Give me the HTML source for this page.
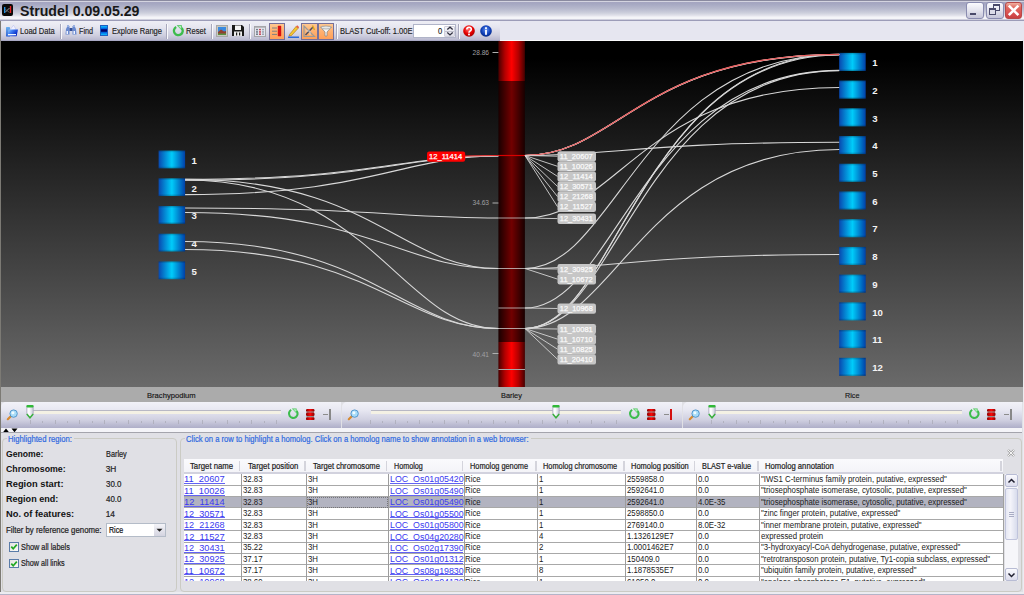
<!DOCTYPE html><html><head><meta charset="utf-8"><style>
*{box-sizing:border-box;margin:0;padding:0}
html,body{width:1024px;height:595px;overflow:hidden;background:#e0e0e5;font-family:'Liberation Sans', sans-serif;}
.a{position:absolute;white-space:nowrap}
</style></head><body>

<div class="a" style="left:0;top:0;width:1024px;height:21px;background:linear-gradient(#8a8aa0 0px,#8a8aa0 1px,#d4d4e0 1px,#d4d4e0 2px,#a4a4c0 2px,#a6a8c2 4px,#b8bace 9px,#cdcfdc 13px,#e6e6ee 16px,#f4f4f8 17px,#f4f4f8 19px,#c8c8d8 19.6px,#9c9cb8 20px,#9c9cb8 21px)"></div>
<div class="a" style="left:0;top:21px;width:1px;height:574px;background:#7c7a74"></div>
<div class="a" style="left:1023px;top:21px;width:1px;height:574px;background:#ececf0"></div>
<svg class="a" style="left:2px;top:4px" width="11" height="12"><rect x="0" y="0" width="11" height="12" rx="2" fill="#0a0a0a"/>
<rect x="2" y="3" width="1.4" height="6" fill="#2090e0"/><rect x="7.8" y="2" width="1.4" height="7" fill="#e02020"/>
<path d="M3.5 8 L7.5 4" stroke="#a0a0a0" stroke-width="1"/><path d="M3.5 5.5 L7.5 8.5" stroke="#707070" stroke-width="0.8"/></svg>
<div class="a" style="left:19.80px;top:4.08px;font:bold 14px/14px 'Liberation Sans', sans-serif;color:#181818;transform:scaleX(1.010);transform-origin:0 0;">Strudel 0.09.05.29</div>
<div class="a" style="left:966px;top:2px;width:18px;height:17px;border:1px solid #8a8cb0;border-radius:3px;background:linear-gradient(#fbfbfe,#e4e4ee 50%,#c4c4d8)"></div>
<div class="a" style="left:970px;top:13px;width:6px;height:2px;background:#4a4a6a"></div>
<div class="a" style="left:986px;top:2px;width:18px;height:17px;border:1px solid #8a8cb0;border-radius:3px;background:linear-gradient(#fbfbfe,#e4e4ee 50%,#c4c4d8)"></div>
<div class="a" style="left:993px;top:4px;width:7px;height:7px;border:1px solid #4a4a6a;border-top-width:2px"></div>
<div class="a" style="left:989px;top:8px;width:7px;height:7px;border:1px solid #4a4a6a;border-top-width:2px;background:#dcdce8"></div>
<div class="a" style="left:1005px;top:2px;width:17px;height:17px;border:1px solid #b84848;border-radius:3px;background:linear-gradient(#f0b0a0,#e06a60 30%,#d85050 70%,#c84040)"></div>
<svg class="a" style="left:1005px;top:2px" width="17" height="17"><path d="M3.8 3.6 L13.4 13.2 M13.4 3.6 L3.8 13.2" stroke="#fff" stroke-width="2.6"/></svg>
<div class="a" style="left:1px;top:21px;width:1023px;height:20px;background:#e6e6f0"></div>
<div class="a" style="left:1px;top:21px;width:499px;height:20px;border-radius:5px 0 0 0;background:linear-gradient(#eeeef5,#e6e6f0 30%,#d0d0e0 70%,#b4b4cc)"></div>
<div class="a" style="left:1px;top:40px;width:499px;height:1px;background:#a8a8c4"></div>
<div class="a" style="left:500px;top:40px;width:522px;height:1px;background:#fafafc"></div>
<svg class="a" style="left:3px;top:22px" width="16" height="16"><defs><linearGradient id="fb" x1="0" y1="0" x2="0" y2="1"><stop offset="0" stop-color="#6ab0f0"/><stop offset="1" stop-color="#3060d0"/></linearGradient><linearGradient id="ff" x1="0" y1="0" x2="1" y2="0.6"><stop offset="0" stop-color="#a0dcff"/><stop offset="0.45" stop-color="#3a78f0"/><stop offset="1" stop-color="#0020c0"/></linearGradient></defs><rect x="3" y="5" width="4" height="9.5" rx="0.6" fill="url(#fb)"/><path d="M6.5 8.5 L10.5 3.2 L13.2 7.6 L8.5 9.2z" fill="#f2f2ff" stroke="#b0b8ec" stroke-width="0.5"/><path d="M5.6 7.4 H15 L13.6 14.2 H4.4z" fill="url(#ff)"/><rect x="5" y="12" width="8" height="1.3" fill="#eef6ff"/></svg>
<div class="a" style="left:20.20px;top:26.68px;font:8.3px/8.3px 'Liberation Sans', sans-serif;color:#1c1c1c;transform:scaleX(0.909);transform-origin:0 0;-webkit-text-stroke:0.15px #1c1c1c">Load Data</div>
<div class="a" style="left:60px;top:24px;width:1px;height:15px;background:#a8a8bc"></div><div class="a" style="left:61px;top:24px;width:1px;height:15px;background:#fafafc"></div>
<svg class="a" style="left:65px;top:25px" width="12" height="10"><path d="M1 4 L2.5 1 h2 v8.5 h-4z" fill="#6a8ad0"/><path d="M11 4 L9.5 1 h-2 v8.5 h4z" fill="#6a8ad0"/><rect x="4.5" y="3" width="3" height="3" fill="#34509a"/><rect x="2" y="0" width="2" height="2" fill="#9ab0e0"/><rect x="8" y="0" width="2" height="2" fill="#9ab0e0"/><rect x="1.5" y="6" width="1.5" height="3" fill="#f0f4ff"/><rect x="8.5" y="6" width="1.5" height="3" fill="#f0f4ff"/></svg>
<div class="a" style="left:79.00px;top:26.58px;font:8.3px/8.3px 'Liberation Sans', sans-serif;color:#1c1c1c;transform:scaleX(0.873);transform-origin:0 0;-webkit-text-stroke:0.15px #1c1c1c">Find</div>
<div class="a" style="left:100px;top:25px;width:8px;height:11px;border:1px solid #2060c0;background:linear-gradient(#10c0ff,#0060e0 30%,#000070 42%,#000060 58%,#0060e0 70%,#10c0ff)"></div>
<div class="a" style="left:111.80px;top:26.68px;font:8.3px/8.3px 'Liberation Sans', sans-serif;color:#1c1c1c;transform:scaleX(0.911);transform-origin:0 0;-webkit-text-stroke:0.15px #1c1c1c">Explore Range</div>
<div class="a" style="left:166px;top:24px;width:1px;height:15px;background:#a8a8bc"></div><div class="a" style="left:167px;top:24px;width:1px;height:15px;background:#fafafc"></div>
<svg class="a" style="left:171.5px;top:25px" width="12" height="12"><path d="M4.2 1.9 A4.4 4.4 0 1 0 9.7 2.9" fill="none" stroke="#3cbc4c" stroke-width="2.3"/><path d="M4.6 0.3 H9.9 V5.6z" fill="#40c050"/><path d="M6.2 1 H9.1 V3.9z" fill="#b0f0b8"/></svg>
<div class="a" style="left:185.90px;top:26.68px;font:8.3px/8.3px 'Liberation Sans', sans-serif;color:#1c1c1c;transform:scaleX(0.913);transform-origin:0 0;-webkit-text-stroke:0.15px #1c1c1c">Reset</div>
<div class="a" style="left:211px;top:24px;width:1px;height:15px;background:#a8a8bc"></div><div class="a" style="left:212px;top:24px;width:1px;height:15px;background:#fafafc"></div>
<svg class="a" style="left:216px;top:25px" width="12" height="12"><rect x="0.5" y="0.5" width="11" height="11" fill="#c8c8c0" stroke="#a8a8a8"/><rect x="2" y="2" width="8" height="8" fill="#3a8ae0"/><path d="M2 7 L5 4.5 L8 6.5 L10 6 V10 H2z" fill="#904030"/><rect x="2" y="8.5" width="8" height="1.5" fill="#5a9040"/></svg>
<svg class="a" style="left:232px;top:25px" width="12" height="11"><path d="M0 0 h10 l2 2 v9 h-12z" fill="#1a1a1a"/><rect x="3" y="0.5" width="6" height="4.5" fill="#f4f4f4"/><rect x="2" y="6.5" width="8" height="4.5" fill="#ececec"/><rect x="4" y="7.5" width="1.2" height="3" fill="#1a1a1a"/><rect x="7" y="7.5" width="1.2" height="3" fill="#1a1a1a"/></svg>
<div class="a" style="left:249px;top:24px;width:1px;height:15px;background:#a8a8bc"></div><div class="a" style="left:250px;top:24px;width:1px;height:15px;background:#fafafc"></div>
<svg class="a" style="left:254px;top:25.5px" width="12" height="11"><rect x="0.5" y="0.5" width="11" height="10" fill="#e4e4ec" stroke="#a4a4a8"/><rect x="0.5" y="0.5" width="11" height="1.2" fill="#a8a8ac"/>
<g fill="#586878"><circle cx="3" cy="3.6" r="0.9"/><circle cx="3" cy="5.9" r="0.9"/><circle cx="3" cy="8.2" r="0.9"/></g>
<g fill="#c02838"><circle cx="6" cy="3.6" r="0.9"/><circle cx="6" cy="5.9" r="0.9"/><circle cx="6" cy="8.2" r="0.9"/></g>
<g fill="#8898a8"><circle cx="9" cy="3.6" r="0.9"/><circle cx="9" cy="5.9" r="0.9"/><circle cx="9" cy="8.2" r="0.9"/></g></svg>
<div class="a" style="left:269px;top:23px;width:16px;height:16.5px;border:1px solid #76709a;background:linear-gradient(#ffc890,#ffb070 50%,#ffa058)"></div>
<svg class="a" style="left:271px;top:25px" width="12" height="12"><rect x="6.8" y="0.8" width="3.4" height="10.4" rx="0.6" fill="#d81010"/><path d="M1 3h5M1 6.2h5M1 9.4h5" stroke="#808080" stroke-width="1"/></svg>
<svg class="a" style="left:288px;top:24px" width="11" height="14"><path d="M1.5 10.5 L8 2.5 L10 4.5 L3.5 11.5 L1 12z" fill="#f4c830" stroke="#b07010" stroke-width="0.6"/><path d="M8 2.5 l1.2-1.2 2 2 -1.2 1.2z" fill="#e86040"/><rect x="0" y="12.5" width="11" height="1.5" fill="#2a6ad8"/></svg>
<div class="a" style="left:301px;top:23px;width:17px;height:16.5px;border:1px solid #76709a;background:linear-gradient(#ffc890,#ffb070 50%,#ffa058)"></div>
<div class="a" style="left:318px;top:23px;width:16px;height:16.5px;border:1px solid #76709a;background:linear-gradient(#ffc890,#ffb070 50%,#ffa058)"></div>
<svg class="a" style="left:303px;top:25px" width="13" height="12"><path d="M1 11.5 V1 L11.5 11.5z" fill="none" stroke="#9a9a9a" stroke-width="1.2"/><path d="M2.5 10 L10 2" stroke="#505060" stroke-width="1.4"/><path d="M9.5 0.5 L11.5 5" stroke="#d8a820" stroke-width="1.5"/><path d="M3 6 h4 v4" fill="none" stroke="#e0e0e0" stroke-width="0.8"/></svg>
<svg class="a" style="left:320px;top:25px" width="12" height="12"><path d="M0.5 2 L11.5 2 L7 7 L7 11 L5 11 L5 7z" fill="#f8f8f8" stroke="#8a8a8a" stroke-width="0.8"/><ellipse cx="6" cy="2.5" rx="5" ry="1.5" fill="#e8e8e8" stroke="#8a8a8a" stroke-width="0.6"/></svg>
<div class="a" style="left:336px;top:24px;width:1px;height:15px;background:#a8a8bc"></div><div class="a" style="left:337px;top:24px;width:1px;height:15px;background:#fafafc"></div>
<div class="a" style="left:339.60px;top:26.68px;font:8.3px/8.3px 'Liberation Sans', sans-serif;color:#1c1c1c;transform:scaleX(0.913);transform-origin:0 0;-webkit-text-stroke:0.15px #1c1c1c">BLAST Cut-off: 1.00E</div>
<div class="a" style="left:413px;top:24px;width:43px;height:14px;border:1px solid #b0b4c8;background:#fff"></div>
<div class="a" style="left:437.80px;top:26.88px;font:8.3px/8.3px 'Liberation Sans', sans-serif;color:#1c1c1c;transform:scaleX(0.910);transform-origin:0 0;-webkit-text-stroke:0.15px #1c1c1c">0</div>
<div class="a" style="left:444px;top:25.5px;width:10.5px;height:11.5px;background:linear-gradient(#f6f6fa,#dedee8);border:1px solid #d0d0dc;border-radius:1px"></div><div class="a" style="left:445px;top:30.5px;width:9px;height:1px;background:#c0c0cc"></div>
<svg class="a" style="left:445.5px;top:26px" width="8" height="10"><path d="M1.3 3.6 L4 1.2 L6.7 3.6 M1.3 6.5 L4 8.9 L6.7 6.5" fill="none" stroke="#303040" stroke-width="1.3"/></svg>
<div class="a" style="left:458px;top:24px;width:1px;height:15px;background:#a8a8bc"></div><div class="a" style="left:459px;top:24px;width:1px;height:15px;background:#fafafc"></div>
<svg class="a" style="left:463px;top:25px" width="12" height="12"><defs><radialGradient id="rq" cx="0.45" cy="0.35" r="0.65"><stop offset="0" stop-color="#ff7070"/><stop offset="0.6" stop-color="#e80000"/><stop offset="1" stop-color="#a00000"/></radialGradient><radialGradient id="bq" cx="0.5" cy="0.4" r="0.65"><stop offset="0" stop-color="#6090f0"/><stop offset="0.6" stop-color="#1040b8"/><stop offset="1" stop-color="#002070"/></radialGradient></defs><circle cx="6" cy="6" r="5.8" fill="url(#rq)"/><path d="M3.8 4.5 Q3.8 2.2 6 2.2 Q8.3 2.2 8.3 4.3 Q8.3 5.5 6.8 6.3 Q6 6.8 6 7.8" fill="none" stroke="#fff" stroke-width="1.6"/><rect x="5.1" y="8.6" width="1.8" height="1.7" fill="#fff"/></svg>
<svg class="a" style="left:480px;top:25px" width="12" height="12"><circle cx="6" cy="6" r="5.8" fill="url(#bq)"/><rect x="5.1" y="2.2" width="1.8" height="1.8" fill="#fff"/><rect x="5.1" y="4.8" width="1.8" height="5" fill="#fff"/></svg>
<svg class="a" style="left:1px;top:41px" width="1022" height="346" viewBox="1 41 1022 346">
<defs>
<linearGradient id="bg" x1="0" y1="41" x2="0" y2="387" gradientUnits="userSpaceOnUse"><stop offset="0" stop-color="#000"/><stop offset="0.05" stop-color="#000"/><stop offset="1" stop-color="#6a6a6a"/></linearGradient>
<linearGradient id="blue" x1="0" y1="0" x2="1" y2="0"><stop offset="0" stop-color="#0848b0"/><stop offset="0.5" stop-color="#00ccfa"/><stop offset="1" stop-color="#0040a8"/></linearGradient>
<linearGradient id="bshade" x1="0" y1="0" x2="0" y2="1"><stop offset="0" stop-color="#000" stop-opacity="0.25"/><stop offset="0.12" stop-color="#000" stop-opacity="0"/><stop offset="0.88" stop-color="#000" stop-opacity="0"/><stop offset="1" stop-color="#000" stop-opacity="0.25"/></linearGradient>
<linearGradient id="redB" x1="0" y1="0" x2="1" y2="0"><stop offset="0" stop-color="#460000"/><stop offset="0.25" stop-color="#b40000"/><stop offset="0.5" stop-color="#ff0000"/><stop offset="0.75" stop-color="#b40000"/><stop offset="1" stop-color="#460000"/></linearGradient>
<linearGradient id="redD" x1="0" y1="0" x2="1" y2="0"><stop offset="0" stop-color="#180000"/><stop offset="0.5" stop-color="#720000"/><stop offset="1" stop-color="#180000"/></linearGradient>
</defs>
<rect x="0" y="41" width="1024" height="346" fill="url(#bg)"/>
<rect x="158.6" y="150.60" width="26.5" height="17.7" fill="url(#blue)"/>
<rect x="158.6" y="150.60" width="26.5" height="17.7" fill="url(#bshade)"/>
<text x="191.6" y="163.80" style="font-family:'Liberation Sans'" font-weight="bold" font-size="9.6" fill="#f4f4f4">1</text>
<rect x="158.6" y="178.32" width="26.5" height="17.7" fill="url(#blue)"/>
<rect x="158.6" y="178.32" width="26.5" height="17.7" fill="url(#bshade)"/>
<text x="191.6" y="191.52" style="font-family:'Liberation Sans'" font-weight="bold" font-size="9.6" fill="#f4f4f4">2</text>
<rect x="158.6" y="206.04" width="26.5" height="17.7" fill="url(#blue)"/>
<rect x="158.6" y="206.04" width="26.5" height="17.7" fill="url(#bshade)"/>
<text x="191.6" y="219.24" style="font-family:'Liberation Sans'" font-weight="bold" font-size="9.6" fill="#f4f4f4">3</text>
<rect x="158.6" y="233.76" width="26.5" height="17.7" fill="url(#blue)"/>
<rect x="158.6" y="233.76" width="26.5" height="17.7" fill="url(#bshade)"/>
<text x="191.6" y="246.96" style="font-family:'Liberation Sans'" font-weight="bold" font-size="9.6" fill="#f4f4f4">4</text>
<rect x="158.6" y="261.48" width="26.5" height="17.7" fill="url(#blue)"/>
<rect x="158.6" y="261.48" width="26.5" height="17.7" fill="url(#bshade)"/>
<text x="191.6" y="274.68" style="font-family:'Liberation Sans'" font-weight="bold" font-size="9.6" fill="#f4f4f4">5</text>
<rect x="839.2" y="52.90" width="26.5" height="18" fill="url(#blue)"/>
<rect x="839.2" y="52.90" width="26.5" height="18" fill="url(#bshade)"/>
<text x="872.2" y="66.10" style="font-family:'Liberation Sans'" font-weight="bold" font-size="9.6" fill="#f4f4f4">1</text>
<rect x="839.2" y="80.62" width="26.5" height="18" fill="url(#blue)"/>
<rect x="839.2" y="80.62" width="26.5" height="18" fill="url(#bshade)"/>
<text x="872.2" y="93.82" style="font-family:'Liberation Sans'" font-weight="bold" font-size="9.6" fill="#f4f4f4">2</text>
<rect x="839.2" y="108.34" width="26.5" height="18" fill="url(#blue)"/>
<rect x="839.2" y="108.34" width="26.5" height="18" fill="url(#bshade)"/>
<text x="872.2" y="121.54" style="font-family:'Liberation Sans'" font-weight="bold" font-size="9.6" fill="#f4f4f4">3</text>
<rect x="839.2" y="136.06" width="26.5" height="18" fill="url(#blue)"/>
<rect x="839.2" y="136.06" width="26.5" height="18" fill="url(#bshade)"/>
<text x="872.2" y="149.26" style="font-family:'Liberation Sans'" font-weight="bold" font-size="9.6" fill="#f4f4f4">4</text>
<rect x="839.2" y="163.78" width="26.5" height="18" fill="url(#blue)"/>
<rect x="839.2" y="163.78" width="26.5" height="18" fill="url(#bshade)"/>
<text x="872.2" y="176.98" style="font-family:'Liberation Sans'" font-weight="bold" font-size="9.6" fill="#f4f4f4">5</text>
<rect x="839.2" y="191.50" width="26.5" height="18" fill="url(#blue)"/>
<rect x="839.2" y="191.50" width="26.5" height="18" fill="url(#bshade)"/>
<text x="872.2" y="204.70" style="font-family:'Liberation Sans'" font-weight="bold" font-size="9.6" fill="#f4f4f4">6</text>
<rect x="839.2" y="219.22" width="26.5" height="18" fill="url(#blue)"/>
<rect x="839.2" y="219.22" width="26.5" height="18" fill="url(#bshade)"/>
<text x="872.2" y="232.42" style="font-family:'Liberation Sans'" font-weight="bold" font-size="9.6" fill="#f4f4f4">7</text>
<rect x="839.2" y="246.94" width="26.5" height="18" fill="url(#blue)"/>
<rect x="839.2" y="246.94" width="26.5" height="18" fill="url(#bshade)"/>
<text x="872.2" y="260.14" style="font-family:'Liberation Sans'" font-weight="bold" font-size="9.6" fill="#f4f4f4">8</text>
<rect x="839.2" y="274.66" width="26.5" height="18" fill="url(#blue)"/>
<rect x="839.2" y="274.66" width="26.5" height="18" fill="url(#bshade)"/>
<text x="872.2" y="287.86" style="font-family:'Liberation Sans'" font-weight="bold" font-size="9.6" fill="#f4f4f4">9</text>
<rect x="839.2" y="302.38" width="26.5" height="18" fill="url(#blue)"/>
<rect x="839.2" y="302.38" width="26.5" height="18" fill="url(#bshade)"/>
<text x="872.2" y="315.58" style="font-family:'Liberation Sans'" font-weight="bold" font-size="9.6" fill="#f4f4f4">10</text>
<rect x="839.2" y="330.10" width="26.5" height="18" fill="url(#blue)"/>
<rect x="839.2" y="330.10" width="26.5" height="18" fill="url(#bshade)"/>
<text x="872.2" y="343.30" style="font-family:'Liberation Sans'" font-weight="bold" font-size="9.6" fill="#f4f4f4">11</text>
<rect x="839.2" y="357.82" width="26.5" height="18" fill="url(#blue)"/>
<rect x="839.2" y="357.82" width="26.5" height="18" fill="url(#bshade)"/>
<text x="872.2" y="371.02" style="font-family:'Liberation Sans'" font-weight="bold" font-size="9.6" fill="#f4f4f4">12</text>
<rect x="498.4" y="41" width="26.5" height="40" fill="url(#redB)"/>
<rect x="498.4" y="81" width="26.5" height="261" fill="url(#redD)"/>
<rect x="498.4" y="342" width="26.5" height="45" fill="url(#redB)"/>
<line x1="498.4" y1="369.5" x2="525" y2="369.5" stroke="#a8a8a8" stroke-width="1"/>
<line x1="492.5" y1="52.5" x2="498.4" y2="52.5" stroke="#b0b0b0" stroke-width="1"/>
<text x="472.6" y="54.9" style="font-family:'Liberation Sans'" font-size="7.5" textLength="16.4" lengthAdjust="spacingAndGlyphs" fill="#a0a0a4">28.86</text>
<line x1="492.5" y1="203" x2="498.4" y2="203" stroke="#b0b0b0" stroke-width="1"/>
<text x="472.6" y="205.3" style="font-family:'Liberation Sans'" font-size="7.5" textLength="16.4" lengthAdjust="spacingAndGlyphs" fill="#a0a0a4">34.63</text>
<line x1="492.5" y1="353.5" x2="498.4" y2="353.5" stroke="#b0b0b0" stroke-width="1"/>
<text x="472.6" y="356.6" style="font-family:'Liberation Sans'" font-size="7.5" textLength="16.4" lengthAdjust="spacingAndGlyphs" fill="#a0a0a4">40.41</text>
<path d="M185.1 179.3 C373.1 179.3 401.3 155.5 498.4 155.5" fill="none" stroke="#d8d8d8" stroke-width="1.1" opacity="1"/>
<path d="M185.1 180.3 C373.1 180.3 401.3 156 498.4 156" fill="none" stroke="#d8d8d8" stroke-width="1.1" opacity="1"/>
<path d="M185.1 194.6 C373.1 194.6 401.3 156 498.4 156" fill="none" stroke="#d8d8d8" stroke-width="1.1" opacity="1"/>
<path d="M185.1 179.3 C373.1 179.3 401.3 268.5 498.4 268.5" fill="none" stroke="#d8d8d8" stroke-width="1.1" opacity="1"/>
<path d="M185.1 180 C373.1 180 401.3 328.5 498.4 328.5" fill="none" stroke="#d8d8d8" stroke-width="1.1" opacity="1"/>
<path d="M185.1 208 C373.1 208 401.3 218 498.4 218" fill="none" stroke="#d8d8d8" stroke-width="1.1" opacity="1"/>
<path d="M185.1 212.5 C373.1 212.5 401.3 268.5 498.4 268.5" fill="none" stroke="#d8d8d8" stroke-width="1.1" opacity="1"/>
<path d="M185.1 241.5 C373.1 241.5 401.3 328.5 498.4 328.5" fill="none" stroke="#d8d8d8" stroke-width="1.1" opacity="1"/>
<path d="M185.1 249.5 C373.1 249.5 401.3 328.5 498.4 328.5" fill="none" stroke="#d8d8d8" stroke-width="1.1" opacity="1"/>
<line x1="498.4" y1="155.5" x2="525" y2="155.5" stroke="#d0d0d0" stroke-width="0.9" opacity="0.85"/>
<line x1="498.4" y1="218" x2="525" y2="218" stroke="#d0d0d0" stroke-width="0.9" opacity="0.85"/>
<line x1="498.4" y1="268.5" x2="525" y2="268.5" stroke="#d0d0d0" stroke-width="0.9" opacity="0.85"/>
<line x1="498.4" y1="308" x2="525" y2="308" stroke="#d0d0d0" stroke-width="0.9" opacity="0.85"/>
<line x1="498.4" y1="328.5" x2="525" y2="328.5" stroke="#d0d0d0" stroke-width="0.9" opacity="0.85"/>
<path d="M525 155.5 C616.1 155.5 641.3 54.3 839.2 54.3" fill="none" stroke="#d8d8d8" stroke-width="1.1" opacity="1"/>
<path d="M525 155.5 C616.1 155.5 641.3 54.5 839.2 54.5" fill="none" stroke="#d8d8d8" stroke-width="1.1" opacity="1"/>
<path d="M525 155.5 C616.1 155.5 641.3 142.3 839.2 142.3" fill="none" stroke="#d8d8d8" stroke-width="1.1" opacity="1"/>
<path d="M525 155.5 C616.1 155.5 641.3 54.8 839.2 54.8" fill="none" stroke="#d8d8d8" stroke-width="1.1" opacity="1"/>
<path d="M525 218 C616.1 218 641.3 87.5 839.2 87.5" fill="none" stroke="#d8d8d8" stroke-width="1.1" opacity="1"/>
<path d="M525 268.5 C616.1 268.5 641.3 54.5 839.2 54.5" fill="none" stroke="#d8d8d8" stroke-width="1.1" opacity="1"/>
<path d="M525 268.5 C616.1 268.5 641.3 254.5 839.2 254.5" fill="none" stroke="#d8d8d8" stroke-width="1.1" opacity="1"/>
<path d="M525 308 C616.1 308 641.3 70.4 839.2 70.4" fill="none" stroke="#d8d8d8" stroke-width="1.1" opacity="1"/>
<path d="M525 328.5 C616.1 328.5 641.3 54.3 839.2 54.3" fill="none" stroke="#d8d8d8" stroke-width="1.1" opacity="1"/>
<path d="M525 328.5 C616.1 328.5 641.3 55 839.2 55" fill="none" stroke="#d8d8d8" stroke-width="1.1" opacity="1"/>
<path d="M525 328.5 C616.1 328.5 641.3 70.6 839.2 70.6" fill="none" stroke="#d8d8d8" stroke-width="1.1" opacity="1"/>
<path d="M525 328.5 C616.1 328.5 641.3 149.5 839.2 149.5" fill="none" stroke="#d8d8d8" stroke-width="1.1" opacity="1"/>
<path d="M525 155.5 C616.1 155.5 641.3 54.3 839.2 54.3" fill="none" stroke="#e85c5c" stroke-width="1.3" opacity="1"/>
<line x1="465" y1="156" x2="498.4" y2="155.5" stroke="#e02020" stroke-width="1.2"/>
<line x1="498.4" y1="155.5" x2="525" y2="155.5" stroke="#d80000" stroke-width="1.2"/>
<line x1="525" y1="155.5" x2="557.5" y2="156.2" stroke="#d4d4d4" stroke-width="0.9"/>
<line x1="525" y1="155.5" x2="557.5" y2="166.3" stroke="#d4d4d4" stroke-width="0.9"/>
<line x1="525" y1="155.5" x2="557.5" y2="176.4" stroke="#d4d4d4" stroke-width="0.9"/>
<line x1="525" y1="155.5" x2="557.5" y2="186.5" stroke="#d4d4d4" stroke-width="0.9"/>
<line x1="525" y1="155.5" x2="557.5" y2="196.6" stroke="#d4d4d4" stroke-width="0.9"/>
<line x1="525" y1="155.5" x2="557.5" y2="206.7" stroke="#d4d4d4" stroke-width="0.9"/>
<line x1="525" y1="218" x2="557.5" y2="218.6" stroke="#d4d4d4" stroke-width="0.9"/>
<line x1="525" y1="268.5" x2="557.5" y2="269" stroke="#d4d4d4" stroke-width="0.9"/>
<line x1="525" y1="268.5" x2="557.5" y2="279.1" stroke="#d4d4d4" stroke-width="0.9"/>
<line x1="525" y1="308" x2="557.5" y2="308.5" stroke="#d4d4d4" stroke-width="0.9"/>
<line x1="525" y1="328.5" x2="557.5" y2="329" stroke="#d4d4d4" stroke-width="0.9"/>
<line x1="525" y1="328.5" x2="557.5" y2="339.1" stroke="#d4d4d4" stroke-width="0.9"/>
<line x1="525" y1="328.5" x2="557.5" y2="349.2" stroke="#d4d4d4" stroke-width="0.9"/>
<line x1="525" y1="328.5" x2="557.5" y2="359.3" stroke="#d4d4d4" stroke-width="0.9"/>
<rect x="557.5" y="151.2" width="38.5" height="10.3" rx="2.2" fill="#c6c6c6"/>
<text x="559.8" y="158.9" style="font-family:'Liberation Sans'" font-size="8.1" textLength="33" lengthAdjust="spacingAndGlyphs" fill="#fafafa" stroke="#fafafa" stroke-width="0.25">11_20607</text>
<rect x="557.5" y="161.3" width="38.5" height="10.3" rx="2.2" fill="#c6c6c6"/>
<text x="559.8" y="169.0" style="font-family:'Liberation Sans'" font-size="8.1" textLength="33" lengthAdjust="spacingAndGlyphs" fill="#fafafa" stroke="#fafafa" stroke-width="0.25">11_10026</text>
<rect x="557.5" y="171.4" width="38.5" height="10.3" rx="2.2" fill="#c6c6c6"/>
<text x="559.8" y="179.1" style="font-family:'Liberation Sans'" font-size="8.1" textLength="33" lengthAdjust="spacingAndGlyphs" fill="#fafafa" stroke="#fafafa" stroke-width="0.25">12_11414</text>
<rect x="557.5" y="181.5" width="38.5" height="10.3" rx="2.2" fill="#c6c6c6"/>
<text x="559.8" y="189.2" style="font-family:'Liberation Sans'" font-size="8.1" textLength="33" lengthAdjust="spacingAndGlyphs" fill="#fafafa" stroke="#fafafa" stroke-width="0.25">12_30571</text>
<rect x="557.5" y="191.6" width="38.5" height="10.3" rx="2.2" fill="#c6c6c6"/>
<text x="559.8" y="199.3" style="font-family:'Liberation Sans'" font-size="8.1" textLength="33" lengthAdjust="spacingAndGlyphs" fill="#fafafa" stroke="#fafafa" stroke-width="0.25">12_21268</text>
<rect x="557.5" y="201.7" width="38.5" height="10.3" rx="2.2" fill="#c6c6c6"/>
<text x="559.8" y="209.4" style="font-family:'Liberation Sans'" font-size="8.1" textLength="33" lengthAdjust="spacingAndGlyphs" fill="#fafafa" stroke="#fafafa" stroke-width="0.25">12_11527</text>
<rect x="557.5" y="213.6" width="38.5" height="10.3" rx="2.2" fill="#c6c6c6"/>
<text x="559.8" y="221.3" style="font-family:'Liberation Sans'" font-size="8.1" textLength="33" lengthAdjust="spacingAndGlyphs" fill="#fafafa" stroke="#fafafa" stroke-width="0.25">12_30431</text>
<rect x="557.5" y="264.0" width="38.5" height="10.3" rx="2.2" fill="#c6c6c6"/>
<text x="559.8" y="271.7" style="font-family:'Liberation Sans'" font-size="8.1" textLength="33" lengthAdjust="spacingAndGlyphs" fill="#fafafa" stroke="#fafafa" stroke-width="0.25">12_30925</text>
<rect x="557.5" y="274.1" width="38.5" height="10.3" rx="2.2" fill="#c6c6c6"/>
<text x="559.8" y="281.8" style="font-family:'Liberation Sans'" font-size="8.1" textLength="33" lengthAdjust="spacingAndGlyphs" fill="#fafafa" stroke="#fafafa" stroke-width="0.25">11_10672</text>
<rect x="557.5" y="303.5" width="38.5" height="10.3" rx="2.2" fill="#c6c6c6"/>
<text x="559.8" y="311.2" style="font-family:'Liberation Sans'" font-size="8.1" textLength="33" lengthAdjust="spacingAndGlyphs" fill="#fafafa" stroke="#fafafa" stroke-width="0.25">12_10968</text>
<rect x="557.5" y="324.0" width="38.5" height="10.3" rx="2.2" fill="#c6c6c6"/>
<text x="559.8" y="331.7" style="font-family:'Liberation Sans'" font-size="8.1" textLength="33" lengthAdjust="spacingAndGlyphs" fill="#fafafa" stroke="#fafafa" stroke-width="0.25">11_10081</text>
<rect x="557.5" y="334.1" width="38.5" height="10.3" rx="2.2" fill="#c6c6c6"/>
<text x="559.8" y="341.8" style="font-family:'Liberation Sans'" font-size="8.1" textLength="33" lengthAdjust="spacingAndGlyphs" fill="#fafafa" stroke="#fafafa" stroke-width="0.25">11_10710</text>
<rect x="557.5" y="344.2" width="38.5" height="10.3" rx="2.2" fill="#c6c6c6"/>
<text x="559.8" y="351.9" style="font-family:'Liberation Sans'" font-size="8.1" textLength="33" lengthAdjust="spacingAndGlyphs" fill="#fafafa" stroke="#fafafa" stroke-width="0.25">11_10825</text>
<rect x="557.5" y="354.3" width="38.5" height="10.3" rx="2.2" fill="#c6c6c6"/>
<text x="559.8" y="362.0" style="font-family:'Liberation Sans'" font-size="8.1" textLength="33" lengthAdjust="spacingAndGlyphs" fill="#fafafa" stroke="#fafafa" stroke-width="0.25">11_20410</text>
<rect x="427" y="151.5" width="38.2" height="10.3" rx="2.2" fill="#ff0000"/>
<text x="429" y="159.3" style="font-family:'Liberation Sans'" font-size="8.1" textLength="33.2" lengthAdjust="spacingAndGlyphs" fill="#fff" stroke="#fff" stroke-width="0.25">12_11414</text>
</svg>
<div class="a" style="left:1px;top:387px;width:1022px;height:14.5px;background:#ababab"></div>
<div class="a" style="left:146.70px;top:391.58px;font:7.7px/7.7px 'Liberation Sans', sans-serif;color:#161616;transform:scaleX(0.990);transform-origin:0 0;-webkit-text-stroke:0.15px #161616;">Brachypodium</div>
<div class="a" style="left:500.90px;top:391.58px;font:7.7px/7.7px 'Liberation Sans', sans-serif;color:#161616;transform:scaleX(0.958);transform-origin:0 0;-webkit-text-stroke:0.15px #161616;">Barley</div>
<div class="a" style="left:844.60px;top:391.58px;font:7.7px/7.7px 'Liberation Sans', sans-serif;color:#161616;transform:scaleX(0.935);transform-origin:0 0;-webkit-text-stroke:0.15px #161616;">Rice</div>
<div class="a" style="left:1px;top:401.5px;width:340px;height:26px;border-radius:5px 0 0 0;background:linear-gradient(#f2f2f8,#e8e8f2 30%,#cfcfe0 70%,#aeaec8)"></div>
<svg class="a" style="left:6px;top:408.5px" width="12" height="12"><path d="M1.8 10.2 L4.8 7.2" stroke="#d88a30" stroke-width="2.2" stroke-linecap="round"/><circle cx="7.6" cy="4.6" r="3.7" fill="#a8dcf8" stroke="#4a90c8" stroke-width="0.9"/><circle cx="6.9" cy="3.7" r="1.5" fill="#f0fcff"/></svg>
<div class="a" style="left:31px;top:410px;width:250px;height:4px;background:#f4f1e4;border-top:1px solid #b8b8c4"></div>
<div class="a" style="left:30.0px;top:419.5px;width:1px;height:4.5px;background:#a8a8b4;opacity:0.7"></div>
<div class="a" style="left:42.3px;top:420.5px;width:1px;height:2.5px;background:#a8a8b4;opacity:0.7"></div>
<div class="a" style="left:54.6px;top:419.5px;width:1px;height:4.5px;background:#a8a8b4;opacity:0.7"></div>
<div class="a" style="left:66.9px;top:420.5px;width:1px;height:2.5px;background:#a8a8b4;opacity:0.7"></div>
<div class="a" style="left:79.2px;top:419.5px;width:1px;height:4.5px;background:#a8a8b4;opacity:0.7"></div>
<div class="a" style="left:91.5px;top:420.5px;width:1px;height:2.5px;background:#a8a8b4;opacity:0.7"></div>
<div class="a" style="left:103.8px;top:419.5px;width:1px;height:4.5px;background:#a8a8b4;opacity:0.7"></div>
<div class="a" style="left:116.1px;top:420.5px;width:1px;height:2.5px;background:#a8a8b4;opacity:0.7"></div>
<div class="a" style="left:128.4px;top:419.5px;width:1px;height:4.5px;background:#a8a8b4;opacity:0.7"></div>
<div class="a" style="left:140.7px;top:420.5px;width:1px;height:2.5px;background:#a8a8b4;opacity:0.7"></div>
<div class="a" style="left:153.0px;top:419.5px;width:1px;height:4.5px;background:#a8a8b4;opacity:0.7"></div>
<div class="a" style="left:165.3px;top:420.5px;width:1px;height:2.5px;background:#a8a8b4;opacity:0.7"></div>
<div class="a" style="left:177.6px;top:419.5px;width:1px;height:4.5px;background:#a8a8b4;opacity:0.7"></div>
<div class="a" style="left:189.9px;top:420.5px;width:1px;height:2.5px;background:#a8a8b4;opacity:0.7"></div>
<div class="a" style="left:202.2px;top:419.5px;width:1px;height:4.5px;background:#a8a8b4;opacity:0.7"></div>
<div class="a" style="left:214.5px;top:420.5px;width:1px;height:2.5px;background:#a8a8b4;opacity:0.7"></div>
<div class="a" style="left:226.8px;top:419.5px;width:1px;height:4.5px;background:#a8a8b4;opacity:0.7"></div>
<div class="a" style="left:239.1px;top:420.5px;width:1px;height:2.5px;background:#a8a8b4;opacity:0.7"></div>
<div class="a" style="left:251.4px;top:419.5px;width:1px;height:4.5px;background:#a8a8b4;opacity:0.7"></div>
<div class="a" style="left:263.7px;top:420.5px;width:1px;height:2.5px;background:#a8a8b4;opacity:0.7"></div>
<div class="a" style="left:276.0px;top:419.5px;width:1px;height:4.5px;background:#a8a8b4;opacity:0.7"></div>
<svg class="a" style="left:26.2px;top:405px" width="9" height="14"><defs><linearGradient id="tg1" x1="0" y1="0" x2="1" y2="0"><stop offset="0" stop-color="#f4f4fa"/><stop offset="0.35" stop-color="#ffffff"/><stop offset="1" stop-color="#c8c8d8"/></linearGradient></defs><path d="M0.8 1.5 V9 L4 12.8 L7.2 9 V1.5z" fill="url(#tg1)" stroke="#a8a8bc" stroke-width="0.8"/><rect x="0.4" y="0" width="7.2" height="2.4" rx="1" fill="#30b838"/><path d="M0.8 9 L4 12.8 L7.2 9" fill="none" stroke="#3cb040" stroke-width="1.5"/></svg>
<svg class="a" style="left:287.0px;top:408px" width="12" height="12"><path d="M4.2 1.9 A4.3 4.3 0 1 0 9.6 2.9" fill="none" stroke="#3cbc4c" stroke-width="2.1"/><path d="M4.8 0.6 H9.6 V5.4z" fill="#48c858"/><path d="M6.2 1.2 H8.9 V3.9z" fill="#b8f0c0"/></svg>
<svg class="a" style="left:305.8px;top:408.8px" width="9" height="12"><defs><linearGradient id="rs1" x1="0" y1="0" x2="1" y2="0"><stop offset="0" stop-color="#8a0000"/><stop offset="0.5" stop-color="#ff0808"/><stop offset="1" stop-color="#8a0000"/></linearGradient></defs><rect x="0.5" y="2.2" width="7.5" height="1.6" fill="#909090"/><rect x="0.5" y="6.8" width="7.5" height="1.6" fill="#909090"/><rect x="0" y="0" width="8.5" height="2.6" rx="1.2" fill="url(#rs1)"/><rect x="0" y="3.6" width="8.5" height="3.3" rx="1.2" fill="url(#rs1)"/><rect x="0" y="8.2" width="8.5" height="2.9" rx="1.2" fill="url(#rs1)"/></svg>
<div class="a" style="left:323.0px;top:413.5px;width:5px;height:1.8px;background:#8c8c8c"></div><div class="a" style="left:329.0px;top:408.7px;width:2px;height:11.3px;background:#888888"></div>
<div class="a" style="left:342px;top:401.5px;width:340px;height:26px;border-radius:5px 0 0 0;background:linear-gradient(#f2f2f8,#e8e8f2 30%,#cfcfe0 70%,#aeaec8)"></div>
<svg class="a" style="left:347px;top:408.5px" width="12" height="12"><path d="M1.8 10.2 L4.8 7.2" stroke="#d88a30" stroke-width="2.2" stroke-linecap="round"/><circle cx="7.6" cy="4.6" r="3.7" fill="#a8dcf8" stroke="#4a90c8" stroke-width="0.9"/><circle cx="6.9" cy="3.7" r="1.5" fill="#f0fcff"/></svg>
<div class="a" style="left:371px;top:410px;width:250px;height:4px;background:#f4f1e4;border-top:1px solid #b8b8c4"></div>
<div class="a" style="left:370.0px;top:419.5px;width:1px;height:4.5px;background:#a8a8b4;opacity:0.7"></div>
<div class="a" style="left:382.3px;top:420.5px;width:1px;height:2.5px;background:#a8a8b4;opacity:0.7"></div>
<div class="a" style="left:394.6px;top:419.5px;width:1px;height:4.5px;background:#a8a8b4;opacity:0.7"></div>
<div class="a" style="left:406.9px;top:420.5px;width:1px;height:2.5px;background:#a8a8b4;opacity:0.7"></div>
<div class="a" style="left:419.2px;top:419.5px;width:1px;height:4.5px;background:#a8a8b4;opacity:0.7"></div>
<div class="a" style="left:431.5px;top:420.5px;width:1px;height:2.5px;background:#a8a8b4;opacity:0.7"></div>
<div class="a" style="left:443.8px;top:419.5px;width:1px;height:4.5px;background:#a8a8b4;opacity:0.7"></div>
<div class="a" style="left:456.1px;top:420.5px;width:1px;height:2.5px;background:#a8a8b4;opacity:0.7"></div>
<div class="a" style="left:468.4px;top:419.5px;width:1px;height:4.5px;background:#a8a8b4;opacity:0.7"></div>
<div class="a" style="left:480.7px;top:420.5px;width:1px;height:2.5px;background:#a8a8b4;opacity:0.7"></div>
<div class="a" style="left:493.0px;top:419.5px;width:1px;height:4.5px;background:#a8a8b4;opacity:0.7"></div>
<div class="a" style="left:505.3px;top:420.5px;width:1px;height:2.5px;background:#a8a8b4;opacity:0.7"></div>
<div class="a" style="left:517.6px;top:419.5px;width:1px;height:4.5px;background:#a8a8b4;opacity:0.7"></div>
<div class="a" style="left:529.9px;top:420.5px;width:1px;height:2.5px;background:#a8a8b4;opacity:0.7"></div>
<div class="a" style="left:542.2px;top:419.5px;width:1px;height:4.5px;background:#a8a8b4;opacity:0.7"></div>
<div class="a" style="left:554.5px;top:420.5px;width:1px;height:2.5px;background:#a8a8b4;opacity:0.7"></div>
<div class="a" style="left:566.8px;top:419.5px;width:1px;height:4.5px;background:#a8a8b4;opacity:0.7"></div>
<div class="a" style="left:579.1px;top:420.5px;width:1px;height:2.5px;background:#a8a8b4;opacity:0.7"></div>
<div class="a" style="left:591.4px;top:419.5px;width:1px;height:4.5px;background:#a8a8b4;opacity:0.7"></div>
<div class="a" style="left:603.7px;top:420.5px;width:1px;height:2.5px;background:#a8a8b4;opacity:0.7"></div>
<div class="a" style="left:616.0px;top:419.5px;width:1px;height:4.5px;background:#a8a8b4;opacity:0.7"></div>
<svg class="a" style="left:551.7px;top:405px" width="9" height="14"><defs><linearGradient id="tg342" x1="0" y1="0" x2="1" y2="0"><stop offset="0" stop-color="#f4f4fa"/><stop offset="0.35" stop-color="#ffffff"/><stop offset="1" stop-color="#c8c8d8"/></linearGradient></defs><path d="M0.8 1.5 V9 L4 12.8 L7.2 9 V1.5z" fill="url(#tg342)" stroke="#a8a8bc" stroke-width="0.8"/><rect x="0.4" y="0" width="7.2" height="2.4" rx="1" fill="#30b838"/><path d="M0.8 9 L4 12.8 L7.2 9" fill="none" stroke="#3cb040" stroke-width="1.5"/></svg>
<svg class="a" style="left:628.0px;top:408px" width="12" height="12"><path d="M4.2 1.9 A4.3 4.3 0 1 0 9.6 2.9" fill="none" stroke="#3cbc4c" stroke-width="2.1"/><path d="M4.8 0.6 H9.6 V5.4z" fill="#48c858"/><path d="M6.2 1.2 H8.9 V3.9z" fill="#b8f0c0"/></svg>
<svg class="a" style="left:646.8px;top:408.8px" width="9" height="12"><defs><linearGradient id="rs342" x1="0" y1="0" x2="1" y2="0"><stop offset="0" stop-color="#8a0000"/><stop offset="0.5" stop-color="#ff0808"/><stop offset="1" stop-color="#8a0000"/></linearGradient></defs><rect x="0.5" y="2.2" width="7.5" height="1.6" fill="#909090"/><rect x="0.5" y="6.8" width="7.5" height="1.6" fill="#909090"/><rect x="0" y="0" width="8.5" height="2.6" rx="1.2" fill="url(#rs342)"/><rect x="0" y="3.6" width="8.5" height="3.3" rx="1.2" fill="url(#rs342)"/><rect x="0" y="8.2" width="8.5" height="2.9" rx="1.2" fill="url(#rs342)"/></svg>
<div class="a" style="left:664.0px;top:413.5px;width:5px;height:1.8px;background:#8c8c8c"></div><div class="a" style="left:670.0px;top:408.7px;width:2px;height:11.3px;background:#d41010"></div>
<div class="a" style="left:683px;top:401.5px;width:339px;height:26px;border-radius:5px 0 0 0;background:linear-gradient(#f2f2f8,#e8e8f2 30%,#cfcfe0 70%,#aeaec8)"></div>
<svg class="a" style="left:688px;top:408.5px" width="12" height="12"><path d="M1.8 10.2 L4.8 7.2" stroke="#d88a30" stroke-width="2.2" stroke-linecap="round"/><circle cx="7.6" cy="4.6" r="3.7" fill="#a8dcf8" stroke="#4a90c8" stroke-width="0.9"/><circle cx="6.9" cy="3.7" r="1.5" fill="#f0fcff"/></svg>
<div class="a" style="left:712px;top:410px;width:250px;height:4px;background:#f4f1e4;border-top:1px solid #b8b8c4"></div>
<div class="a" style="left:711.0px;top:419.5px;width:1px;height:4.5px;background:#a8a8b4;opacity:0.7"></div>
<div class="a" style="left:723.3px;top:420.5px;width:1px;height:2.5px;background:#a8a8b4;opacity:0.7"></div>
<div class="a" style="left:735.6px;top:419.5px;width:1px;height:4.5px;background:#a8a8b4;opacity:0.7"></div>
<div class="a" style="left:747.9px;top:420.5px;width:1px;height:2.5px;background:#a8a8b4;opacity:0.7"></div>
<div class="a" style="left:760.2px;top:419.5px;width:1px;height:4.5px;background:#a8a8b4;opacity:0.7"></div>
<div class="a" style="left:772.5px;top:420.5px;width:1px;height:2.5px;background:#a8a8b4;opacity:0.7"></div>
<div class="a" style="left:784.8px;top:419.5px;width:1px;height:4.5px;background:#a8a8b4;opacity:0.7"></div>
<div class="a" style="left:797.1px;top:420.5px;width:1px;height:2.5px;background:#a8a8b4;opacity:0.7"></div>
<div class="a" style="left:809.4px;top:419.5px;width:1px;height:4.5px;background:#a8a8b4;opacity:0.7"></div>
<div class="a" style="left:821.7px;top:420.5px;width:1px;height:2.5px;background:#a8a8b4;opacity:0.7"></div>
<div class="a" style="left:834.0px;top:419.5px;width:1px;height:4.5px;background:#a8a8b4;opacity:0.7"></div>
<div class="a" style="left:846.3px;top:420.5px;width:1px;height:2.5px;background:#a8a8b4;opacity:0.7"></div>
<div class="a" style="left:858.6px;top:419.5px;width:1px;height:4.5px;background:#a8a8b4;opacity:0.7"></div>
<div class="a" style="left:870.9px;top:420.5px;width:1px;height:2.5px;background:#a8a8b4;opacity:0.7"></div>
<div class="a" style="left:883.2px;top:419.5px;width:1px;height:4.5px;background:#a8a8b4;opacity:0.7"></div>
<div class="a" style="left:895.5px;top:420.5px;width:1px;height:2.5px;background:#a8a8b4;opacity:0.7"></div>
<div class="a" style="left:907.8px;top:419.5px;width:1px;height:4.5px;background:#a8a8b4;opacity:0.7"></div>
<div class="a" style="left:920.1px;top:420.5px;width:1px;height:2.5px;background:#a8a8b4;opacity:0.7"></div>
<div class="a" style="left:932.4px;top:419.5px;width:1px;height:4.5px;background:#a8a8b4;opacity:0.7"></div>
<div class="a" style="left:944.7px;top:420.5px;width:1px;height:2.5px;background:#a8a8b4;opacity:0.7"></div>
<div class="a" style="left:957.0px;top:419.5px;width:1px;height:4.5px;background:#a8a8b4;opacity:0.7"></div>
<svg class="a" style="left:707.7px;top:405px" width="9" height="14"><defs><linearGradient id="tg683" x1="0" y1="0" x2="1" y2="0"><stop offset="0" stop-color="#f4f4fa"/><stop offset="0.35" stop-color="#ffffff"/><stop offset="1" stop-color="#c8c8d8"/></linearGradient></defs><path d="M0.8 1.5 V9 L4 12.8 L7.2 9 V1.5z" fill="url(#tg683)" stroke="#a8a8bc" stroke-width="0.8"/><rect x="0.4" y="0" width="7.2" height="2.4" rx="1" fill="#30b838"/><path d="M0.8 9 L4 12.8 L7.2 9" fill="none" stroke="#3cb040" stroke-width="1.5"/></svg>
<svg class="a" style="left:968.0px;top:408px" width="12" height="12"><path d="M4.2 1.9 A4.3 4.3 0 1 0 9.6 2.9" fill="none" stroke="#3cbc4c" stroke-width="2.1"/><path d="M4.8 0.6 H9.6 V5.4z" fill="#48c858"/><path d="M6.2 1.2 H8.9 V3.9z" fill="#b8f0c0"/></svg>
<svg class="a" style="left:986.8px;top:408.8px" width="9" height="12"><defs><linearGradient id="rs683" x1="0" y1="0" x2="1" y2="0"><stop offset="0" stop-color="#8a0000"/><stop offset="0.5" stop-color="#ff0808"/><stop offset="1" stop-color="#8a0000"/></linearGradient></defs><rect x="0.5" y="2.2" width="7.5" height="1.6" fill="#909090"/><rect x="0.5" y="6.8" width="7.5" height="1.6" fill="#909090"/><rect x="0" y="0" width="8.5" height="2.6" rx="1.2" fill="url(#rs683)"/><rect x="0" y="3.6" width="8.5" height="3.3" rx="1.2" fill="url(#rs683)"/><rect x="0" y="8.2" width="8.5" height="2.9" rx="1.2" fill="url(#rs683)"/></svg>
<div class="a" style="left:1004.0px;top:413.5px;width:5px;height:1.8px;background:#8c8c8c"></div><div class="a" style="left:1010.0px;top:408.7px;width:2px;height:11.3px;background:#888888"></div>
<div class="a" style="left:1px;top:427.5px;width:1021px;height:4.5px;background:#f4f4f8"></div>
<svg class="a" style="left:3px;top:428px" width="16" height="5"><path d="M0 4.2 L3 0.5 L6 4.2z M8.5 0.5 L14.5 0.5 L11.5 4.2z" fill="#000"/></svg>
<div class="a" style="left:1px;top:432px;width:1021px;height:1px;background:#a4a4ac"></div>
<div class="a" style="left:1px;top:433px;width:1022px;height:162px;background:#e0e0e5"></div>
<div class="a" style="left:2px;top:438px;width:175px;height:153.5px;border:1px solid #cbcbc4;border-radius:4px"></div>
<div class="a" style="left:7px;top:434px;width:67px;height:9px;background:#e0e0e5"></div>
<div class="a" style="left:8.00px;top:434.88px;font:8.3px/8.3px 'Liberation Sans', sans-serif;color:#2f6ae0;transform:scaleX(0.925);transform-origin:0 0;-webkit-text-stroke:0.2px #2f6ae0;">Highlighted region:</div>
<div class="a" style="left:6.10px;top:448.61px;font:bold 9.4px/9.4px 'Liberation Sans', sans-serif;color:#121212;transform:scaleX(0.921);transform-origin:0 0;">Genome:</div>
<div class="a" style="left:105.70px;top:449.98px;font:8.3px/8.3px 'Liberation Sans', sans-serif;color:#222;transform:scaleX(0.884);transform-origin:0 0;-webkit-text-stroke:0.2px #222;">Barley</div>
<div class="a" style="left:6.10px;top:463.51px;font:bold 9.4px/9.4px 'Liberation Sans', sans-serif;color:#121212;transform:scaleX(0.939);transform-origin:0 0;">Chromosome:</div>
<div class="a" style="left:105.70px;top:465.08px;font:8.3px/8.3px 'Liberation Sans', sans-serif;color:#222;-webkit-text-stroke:0.2px #222;">3H</div>
<div class="a" style="left:6.10px;top:479.21px;font:bold 9.4px/9.4px 'Liberation Sans', sans-serif;color:#121212;transform:scaleX(0.995);transform-origin:0 0;">Region start:</div>
<div class="a" style="left:105.70px;top:479.98px;font:8.3px/8.3px 'Liberation Sans', sans-serif;color:#222;transform:scaleX(0.953);transform-origin:0 0;-webkit-text-stroke:0.2px #222;">30.0</div>
<div class="a" style="left:6.10px;top:493.71px;font:bold 9.4px/9.4px 'Liberation Sans', sans-serif;color:#121212;transform:scaleX(0.965);transform-origin:0 0;">Region end:</div>
<div class="a" style="left:105.70px;top:494.68px;font:8.3px/8.3px 'Liberation Sans', sans-serif;color:#222;transform:scaleX(0.953);transform-origin:0 0;-webkit-text-stroke:0.2px #222;">40.0</div>
<div class="a" style="left:6.10px;top:508.61px;font:bold 9.4px/9.4px 'Liberation Sans', sans-serif;color:#121212;transform:scaleX(0.991);transform-origin:0 0;">No. of features:</div>
<div class="a" style="left:105.70px;top:509.88px;font:8.3px/8.3px 'Liberation Sans', sans-serif;color:#222;-webkit-text-stroke:0.2px #222;">14</div>
<div class="a" style="left:5.80px;top:527.20px;font:8.2px/8.2px 'Liberation Sans', sans-serif;color:#222;transform:scaleX(0.954);transform-origin:0 0;-webkit-text-stroke:0.2px #222;">Filter by reference genome:</div>
<div class="a" style="left:106px;top:523.3px;width:60px;height:14px;border:1px solid #b4bcc8;background:#fff"></div>
<div class="a" style="left:108.50px;top:527.00px;font:8.2px/8.2px 'Liberation Sans', sans-serif;color:#111;transform:scaleX(0.860);transform-origin:0 0;-webkit-text-stroke:0.2px #111;">Rice</div>
<div class="a" style="left:153.8px;top:524.3px;width:11.2px;height:12px;background:linear-gradient(#f4f4f8,#d4d4e0)"></div>
<svg class="a" style="left:156px;top:528px" width="7" height="5"><path d="M0.5 0.8 H6.5 L3.5 3.8z" fill="#202020"/></svg>
<div class="a" style="left:9px;top:542.2px;width:9.8px;height:9.8px;border:1px solid #5a7ca8;background:linear-gradient(135deg,#e4e4e0,#fafaf8)"></div>
<svg class="a" style="left:10px;top:543.2px" width="8" height="8"><path d="M1.3 3.6 L3.2 5.8 L6.8 1.6" fill="none" stroke="#22a822" stroke-width="1.7"/></svg>
<div class="a" style="left:21.00px;top:543.07px;font:8.4px/8.4px 'Liberation Sans', sans-serif;color:#222;transform:scaleX(0.875);transform-origin:0 0;-webkit-text-stroke:0.2px #222;">Show all labels</div>
<div class="a" style="left:9px;top:558.5px;width:9.8px;height:9.8px;border:1px solid #5a7ca8;background:linear-gradient(135deg,#e4e4e0,#fafaf8)"></div>
<svg class="a" style="left:10px;top:559.5px" width="8" height="8"><path d="M1.3 3.6 L3.2 5.8 L6.8 1.6" fill="none" stroke="#22a822" stroke-width="1.7"/></svg>
<div class="a" style="left:21.00px;top:559.27px;font:8.4px/8.4px 'Liberation Sans', sans-serif;color:#222;transform:scaleX(0.861);transform-origin:0 0;-webkit-text-stroke:0.2px #222;">Show all links</div>
<div class="a" style="left:180px;top:438px;width:841.5px;height:153.5px;border:1px solid #cbcbc4;border-radius:4px"></div>
<div class="a" style="left:185px;top:434px;width:346px;height:9px;background:#e0e0e5"></div>
<div class="a" style="left:186.00px;top:434.88px;font:8.3px/8.3px 'Liberation Sans', sans-serif;color:#2f6ae0;transform:scaleX(0.918);transform-origin:0 0;-webkit-text-stroke:0.2px #2f6ae0;">Click on a row to highlight a homolog. Click on a homolog name to show annotation in a web browser:</div>
<svg class="a" style="left:1006.5px;top:448.5px" width="8" height="8"><path d="M1 1 L7 7 M7 1 L1 7" stroke="#a8a8a8" stroke-width="2.4"/><path d="M1 1 L7 7 M7 1 L1 7" stroke="#f4f4f4" stroke-width="1"/></svg>
<div class="a" style="left:184px;top:459px;width:819px;height:13px;background:linear-gradient(#fafafd,#f4f4f8)"></div>
<div class="a" style="left:184px;top:472px;width:819px;height:2px;background:#d2d2de"></div>
<div class="a" style="left:189.70px;top:462.18px;font:8.3px/8.3px 'Liberation Sans', sans-serif;color:#222;transform:scaleX(0.934);transform-origin:0 0;-webkit-text-stroke:0.2px #222;">Target name</div>
<div class="a" style="left:247.70px;top:462.18px;font:8.3px/8.3px 'Liberation Sans', sans-serif;color:#222;transform:scaleX(0.934);transform-origin:0 0;-webkit-text-stroke:0.2px #222;">Target position</div>
<div class="a" style="left:312.80px;top:462.18px;font:8.3px/8.3px 'Liberation Sans', sans-serif;color:#222;transform:scaleX(0.912);transform-origin:0 0;-webkit-text-stroke:0.2px #222;">Target chromosome</div>
<div class="a" style="left:394.20px;top:462.18px;font:8.3px/8.3px 'Liberation Sans', sans-serif;color:#222;transform:scaleX(0.867);transform-origin:0 0;-webkit-text-stroke:0.2px #222;">Homolog</div>
<div class="a" style="left:470.30px;top:462.18px;font:8.3px/8.3px 'Liberation Sans', sans-serif;color:#222;transform:scaleX(0.885);transform-origin:0 0;-webkit-text-stroke:0.2px #222;">Homolog genome</div>
<div class="a" style="left:542.70px;top:462.18px;font:8.3px/8.3px 'Liberation Sans', sans-serif;color:#222;transform:scaleX(0.888);transform-origin:0 0;-webkit-text-stroke:0.2px #222;">Homolog chromosome</div>
<div class="a" style="left:630.80px;top:462.18px;font:8.3px/8.3px 'Liberation Sans', sans-serif;color:#222;transform:scaleX(0.900);transform-origin:0 0;-webkit-text-stroke:0.2px #222;">Homolog position</div>
<div class="a" style="left:701.80px;top:462.18px;font:8.3px/8.3px 'Liberation Sans', sans-serif;color:#222;transform:scaleX(0.884);transform-origin:0 0;-webkit-text-stroke:0.2px #222;">BLAST e-value</div>
<div class="a" style="left:765.00px;top:462.18px;font:8.3px/8.3px 'Liberation Sans', sans-serif;color:#222;transform:scaleX(0.925);transform-origin:0 0;-webkit-text-stroke:0.2px #222;">Homolog annotation</div>
<div class="a" style="left:238.9px;top:461px;width:1.6px;height:10px;background:#d4d4dc"></div>
<div class="a" style="left:304.1px;top:461px;width:1.6px;height:10px;background:#d4d4dc"></div>
<div class="a" style="left:385.7px;top:461px;width:1.6px;height:10px;background:#d4d4dc"></div>
<div class="a" style="left:461.6px;top:461px;width:1.6px;height:10px;background:#d4d4dc"></div>
<div class="a" style="left:535.1px;top:461px;width:1.6px;height:10px;background:#d4d4dc"></div>
<div class="a" style="left:623.0px;top:461px;width:1.6px;height:10px;background:#d4d4dc"></div>
<div class="a" style="left:693.8px;top:461px;width:1.6px;height:10px;background:#d4d4dc"></div>
<div class="a" style="left:757.1px;top:461px;width:1.6px;height:10px;background:#d4d4dc"></div>
<div class="a" style="left:1000.4px;top:461px;width:1.6px;height:10px;background:#d4d4dc"></div>
<div class="a" style="left:184px;top:474px;width:820px;height:107px;overflow:hidden;background:#fff">
<div class="a" style="left:0;top:10.61px;width:820px;height:1px;background:#a8a8a8"></div>
<div class="a" style="left:0.0px;top:0.48px;font:9.6px/9.6px 'Liberation Sans', sans-serif;color:#3a3af0;transform:scaleX(0.969);transform-origin:0 0">11<span style="opacity:0">_</span>20607</div>
<div class="a" style="left:0.0px;top:9.20px;width:40.7px;height:1px;background:#6262f4"></div>
<div class="a" style="left:58.7px;top:0.98px;font:8.3px/8.3px 'Liberation Sans', sans-serif;color:#202020;transform:scaleX(0.942);transform-origin:0 0">32.83</div>
<div class="a" style="left:123.9px;top:0.98px;font:8.3px/8.3px 'Liberation Sans', sans-serif;color:#202020;transform:scaleX(0.942);transform-origin:0 0">3H</div>
<div class="a" style="left:205.6px;top:0.48px;font:9.6px/9.6px 'Liberation Sans', sans-serif;color:#3a3af0;transform:scaleX(0.921);transform-origin:0 0">LOC<span style="opacity:0">_</span>Os01g05420</div>
<div class="a" style="left:205.6px;top:9.20px;width:73.7px;height:1px;background:#6262f4"></div>
<div class="a" style="left:281.4px;top:0.98px;font:8.3px/8.3px 'Liberation Sans', sans-serif;color:#202020;transform:scaleX(0.942);transform-origin:0 0">Rice</div>
<div class="a" style="left:354.9px;top:0.98px;font:8.3px/8.3px 'Liberation Sans', sans-serif;color:#202020;transform:scaleX(0.942);transform-origin:0 0">1</div>
<div class="a" style="left:442.8px;top:0.98px;font:8.3px/8.3px 'Liberation Sans', sans-serif;color:#202020;transform:scaleX(0.942);transform-origin:0 0">2559858.0</div>
<div class="a" style="left:513.6px;top:0.98px;font:8.3px/8.3px 'Liberation Sans', sans-serif;color:#202020;transform:scaleX(0.942);transform-origin:0 0">0.0</div>
<div class="a" style="left:576.9px;top:0.98px;font:8.3px/8.3px 'Liberation Sans', sans-serif;color:#202020;transform:scaleX(0.942);transform-origin:0 0">"IWS1 C-terminus family protein, putative, expressed"</div>
<div class="a" style="left:0;top:22.02px;width:820px;height:1px;background:#a8a8a8"></div>
<div class="a" style="left:0.0px;top:11.89px;font:9.6px/9.6px 'Liberation Sans', sans-serif;color:#3a3af0;transform:scaleX(0.969);transform-origin:0 0">11<span style="opacity:0">_</span>10026</div>
<div class="a" style="left:0.0px;top:20.61px;width:40.7px;height:1px;background:#6262f4"></div>
<div class="a" style="left:58.7px;top:12.39px;font:8.3px/8.3px 'Liberation Sans', sans-serif;color:#202020;transform:scaleX(0.942);transform-origin:0 0">32.83</div>
<div class="a" style="left:123.9px;top:12.39px;font:8.3px/8.3px 'Liberation Sans', sans-serif;color:#202020;transform:scaleX(0.942);transform-origin:0 0">3H</div>
<div class="a" style="left:205.6px;top:11.89px;font:9.6px/9.6px 'Liberation Sans', sans-serif;color:#3a3af0;transform:scaleX(0.921);transform-origin:0 0">LOC<span style="opacity:0">_</span>Os01g05490</div>
<div class="a" style="left:205.6px;top:20.61px;width:73.7px;height:1px;background:#6262f4"></div>
<div class="a" style="left:281.4px;top:12.39px;font:8.3px/8.3px 'Liberation Sans', sans-serif;color:#202020;transform:scaleX(0.942);transform-origin:0 0">Rice</div>
<div class="a" style="left:354.9px;top:12.39px;font:8.3px/8.3px 'Liberation Sans', sans-serif;color:#202020;transform:scaleX(0.942);transform-origin:0 0">1</div>
<div class="a" style="left:442.8px;top:12.39px;font:8.3px/8.3px 'Liberation Sans', sans-serif;color:#202020;transform:scaleX(0.942);transform-origin:0 0">2592641.0</div>
<div class="a" style="left:513.6px;top:12.39px;font:8.3px/8.3px 'Liberation Sans', sans-serif;color:#202020;transform:scaleX(0.942);transform-origin:0 0">0.0</div>
<div class="a" style="left:576.9px;top:12.39px;font:8.3px/8.3px 'Liberation Sans', sans-serif;color:#202020;transform:scaleX(0.942);transform-origin:0 0">"triosephosphate isomerase, cytosolic, putative, expressed"</div>
<div class="a" style="left:0;top:22.82px;width:820px;height:11.41px;background:#b2b3c0"></div>
<div class="a" style="left:0;top:33.43px;width:820px;height:1px;background:#a8a8a8"></div>
<div class="a" style="left:0.0px;top:23.30px;font:9.6px/9.6px 'Liberation Sans', sans-serif;color:#3a3af0;transform:scaleX(0.969);transform-origin:0 0">12<span style="opacity:0">_</span>11414</div>
<div class="a" style="left:0.0px;top:32.02px;width:40.7px;height:1px;background:#6262f4"></div>
<div class="a" style="left:58.7px;top:23.80px;font:8.3px/8.3px 'Liberation Sans', sans-serif;color:#202020;transform:scaleX(0.942);transform-origin:0 0">32.83</div>
<div class="a" style="left:123.9px;top:23.80px;font:8.3px/8.3px 'Liberation Sans', sans-serif;color:#202020;transform:scaleX(0.942);transform-origin:0 0">3H</div>
<div class="a" style="left:205.6px;top:23.30px;font:9.6px/9.6px 'Liberation Sans', sans-serif;color:#3a3af0;transform:scaleX(0.921);transform-origin:0 0">LOC<span style="opacity:0">_</span>Os01g05490</div>
<div class="a" style="left:205.6px;top:32.02px;width:73.7px;height:1px;background:#6262f4"></div>
<div class="a" style="left:281.4px;top:23.80px;font:8.3px/8.3px 'Liberation Sans', sans-serif;color:#202020;transform:scaleX(0.942);transform-origin:0 0">Rice</div>
<div class="a" style="left:354.9px;top:23.80px;font:8.3px/8.3px 'Liberation Sans', sans-serif;color:#202020;transform:scaleX(0.942);transform-origin:0 0">1</div>
<div class="a" style="left:442.8px;top:23.80px;font:8.3px/8.3px 'Liberation Sans', sans-serif;color:#202020;transform:scaleX(0.942);transform-origin:0 0">2592641.0</div>
<div class="a" style="left:513.6px;top:23.80px;font:8.3px/8.3px 'Liberation Sans', sans-serif;color:#202020;transform:scaleX(0.942);transform-origin:0 0">4.0E-35</div>
<div class="a" style="left:576.9px;top:23.80px;font:8.3px/8.3px 'Liberation Sans', sans-serif;color:#202020;transform:scaleX(0.942);transform-origin:0 0">"triosephosphate isomerase, cytosolic, putative, expressed"</div>
<div class="a" style="left:0;top:44.84px;width:820px;height:1px;background:#a8a8a8"></div>
<div class="a" style="left:0.0px;top:34.71px;font:9.6px/9.6px 'Liberation Sans', sans-serif;color:#3a3af0;transform:scaleX(0.953);transform-origin:0 0">12<span style="opacity:0">_</span>30571</div>
<div class="a" style="left:0.0px;top:43.43px;width:40.7px;height:1px;background:#6262f4"></div>
<div class="a" style="left:58.7px;top:35.21px;font:8.3px/8.3px 'Liberation Sans', sans-serif;color:#202020;transform:scaleX(0.942);transform-origin:0 0">32.83</div>
<div class="a" style="left:123.9px;top:35.21px;font:8.3px/8.3px 'Liberation Sans', sans-serif;color:#202020;transform:scaleX(0.942);transform-origin:0 0">3H</div>
<div class="a" style="left:205.6px;top:34.71px;font:9.6px/9.6px 'Liberation Sans', sans-serif;color:#3a3af0;transform:scaleX(0.921);transform-origin:0 0">LOC<span style="opacity:0">_</span>Os01g05500</div>
<div class="a" style="left:205.6px;top:43.43px;width:73.7px;height:1px;background:#6262f4"></div>
<div class="a" style="left:281.4px;top:35.21px;font:8.3px/8.3px 'Liberation Sans', sans-serif;color:#202020;transform:scaleX(0.942);transform-origin:0 0">Rice</div>
<div class="a" style="left:354.9px;top:35.21px;font:8.3px/8.3px 'Liberation Sans', sans-serif;color:#202020;transform:scaleX(0.942);transform-origin:0 0">1</div>
<div class="a" style="left:442.8px;top:35.21px;font:8.3px/8.3px 'Liberation Sans', sans-serif;color:#202020;transform:scaleX(0.942);transform-origin:0 0">2598850.0</div>
<div class="a" style="left:513.6px;top:35.21px;font:8.3px/8.3px 'Liberation Sans', sans-serif;color:#202020;transform:scaleX(0.942);transform-origin:0 0">0.0</div>
<div class="a" style="left:576.9px;top:35.21px;font:8.3px/8.3px 'Liberation Sans', sans-serif;color:#202020;transform:scaleX(0.942);transform-origin:0 0">"zinc finger protein, putative, expressed"</div>
<div class="a" style="left:0;top:56.25px;width:820px;height:1px;background:#a8a8a8"></div>
<div class="a" style="left:0.0px;top:46.12px;font:9.6px/9.6px 'Liberation Sans', sans-serif;color:#3a3af0;transform:scaleX(0.953);transform-origin:0 0">12<span style="opacity:0">_</span>21268</div>
<div class="a" style="left:0.0px;top:54.84px;width:40.7px;height:1px;background:#6262f4"></div>
<div class="a" style="left:58.7px;top:46.62px;font:8.3px/8.3px 'Liberation Sans', sans-serif;color:#202020;transform:scaleX(0.942);transform-origin:0 0">32.83</div>
<div class="a" style="left:123.9px;top:46.62px;font:8.3px/8.3px 'Liberation Sans', sans-serif;color:#202020;transform:scaleX(0.942);transform-origin:0 0">3H</div>
<div class="a" style="left:205.6px;top:46.12px;font:9.6px/9.6px 'Liberation Sans', sans-serif;color:#3a3af0;transform:scaleX(0.921);transform-origin:0 0">LOC<span style="opacity:0">_</span>Os01g05800</div>
<div class="a" style="left:205.6px;top:54.84px;width:73.7px;height:1px;background:#6262f4"></div>
<div class="a" style="left:281.4px;top:46.62px;font:8.3px/8.3px 'Liberation Sans', sans-serif;color:#202020;transform:scaleX(0.942);transform-origin:0 0">Rice</div>
<div class="a" style="left:354.9px;top:46.62px;font:8.3px/8.3px 'Liberation Sans', sans-serif;color:#202020;transform:scaleX(0.942);transform-origin:0 0">1</div>
<div class="a" style="left:442.8px;top:46.62px;font:8.3px/8.3px 'Liberation Sans', sans-serif;color:#202020;transform:scaleX(0.942);transform-origin:0 0">2769140.0</div>
<div class="a" style="left:513.6px;top:46.62px;font:8.3px/8.3px 'Liberation Sans', sans-serif;color:#202020;transform:scaleX(0.942);transform-origin:0 0">8.0E-32</div>
<div class="a" style="left:576.9px;top:46.62px;font:8.3px/8.3px 'Liberation Sans', sans-serif;color:#202020;transform:scaleX(0.942);transform-origin:0 0">"inner membrane protein, putative, expressed"</div>
<div class="a" style="left:0;top:67.66px;width:820px;height:1px;background:#a8a8a8"></div>
<div class="a" style="left:0.0px;top:57.53px;font:9.6px/9.6px 'Liberation Sans', sans-serif;color:#3a3af0;transform:scaleX(0.969);transform-origin:0 0">12<span style="opacity:0">_</span>11527</div>
<div class="a" style="left:0.0px;top:66.25px;width:40.7px;height:1px;background:#6262f4"></div>
<div class="a" style="left:58.7px;top:58.03px;font:8.3px/8.3px 'Liberation Sans', sans-serif;color:#202020;transform:scaleX(0.942);transform-origin:0 0">32.83</div>
<div class="a" style="left:123.9px;top:58.03px;font:8.3px/8.3px 'Liberation Sans', sans-serif;color:#202020;transform:scaleX(0.942);transform-origin:0 0">3H</div>
<div class="a" style="left:205.6px;top:57.53px;font:9.6px/9.6px 'Liberation Sans', sans-serif;color:#3a3af0;transform:scaleX(0.921);transform-origin:0 0">LOC<span style="opacity:0">_</span>Os04g20280</div>
<div class="a" style="left:205.6px;top:66.25px;width:73.7px;height:1px;background:#6262f4"></div>
<div class="a" style="left:281.4px;top:58.03px;font:8.3px/8.3px 'Liberation Sans', sans-serif;color:#202020;transform:scaleX(0.942);transform-origin:0 0">Rice</div>
<div class="a" style="left:354.9px;top:58.03px;font:8.3px/8.3px 'Liberation Sans', sans-serif;color:#202020;transform:scaleX(0.942);transform-origin:0 0">4</div>
<div class="a" style="left:442.8px;top:58.03px;font:8.3px/8.3px 'Liberation Sans', sans-serif;color:#202020;transform:scaleX(0.942);transform-origin:0 0">1.1326129E7</div>
<div class="a" style="left:513.6px;top:58.03px;font:8.3px/8.3px 'Liberation Sans', sans-serif;color:#202020;transform:scaleX(0.942);transform-origin:0 0">0.0</div>
<div class="a" style="left:576.9px;top:58.03px;font:8.3px/8.3px 'Liberation Sans', sans-serif;color:#202020;transform:scaleX(0.942);transform-origin:0 0">expressed protein</div>
<div class="a" style="left:0;top:79.07px;width:820px;height:1px;background:#a8a8a8"></div>
<div class="a" style="left:0.0px;top:68.94px;font:9.6px/9.6px 'Liberation Sans', sans-serif;color:#3a3af0;transform:scaleX(0.953);transform-origin:0 0">12<span style="opacity:0">_</span>30431</div>
<div class="a" style="left:0.0px;top:77.66px;width:40.7px;height:1px;background:#6262f4"></div>
<div class="a" style="left:58.7px;top:69.44px;font:8.3px/8.3px 'Liberation Sans', sans-serif;color:#202020;transform:scaleX(0.942);transform-origin:0 0">35.22</div>
<div class="a" style="left:123.9px;top:69.44px;font:8.3px/8.3px 'Liberation Sans', sans-serif;color:#202020;transform:scaleX(0.942);transform-origin:0 0">3H</div>
<div class="a" style="left:205.6px;top:68.94px;font:9.6px/9.6px 'Liberation Sans', sans-serif;color:#3a3af0;transform:scaleX(0.921);transform-origin:0 0">LOC<span style="opacity:0">_</span>Os02g17390</div>
<div class="a" style="left:205.6px;top:77.66px;width:73.7px;height:1px;background:#6262f4"></div>
<div class="a" style="left:281.4px;top:69.44px;font:8.3px/8.3px 'Liberation Sans', sans-serif;color:#202020;transform:scaleX(0.942);transform-origin:0 0">Rice</div>
<div class="a" style="left:354.9px;top:69.44px;font:8.3px/8.3px 'Liberation Sans', sans-serif;color:#202020;transform:scaleX(0.942);transform-origin:0 0">2</div>
<div class="a" style="left:442.8px;top:69.44px;font:8.3px/8.3px 'Liberation Sans', sans-serif;color:#202020;transform:scaleX(0.942);transform-origin:0 0">1.0001462E7</div>
<div class="a" style="left:513.6px;top:69.44px;font:8.3px/8.3px 'Liberation Sans', sans-serif;color:#202020;transform:scaleX(0.942);transform-origin:0 0">0.0</div>
<div class="a" style="left:576.9px;top:69.44px;font:8.3px/8.3px 'Liberation Sans', sans-serif;color:#202020;transform:scaleX(0.942);transform-origin:0 0">"3-hydroxyacyl-CoA dehydrogenase, putative, expressed"</div>
<div class="a" style="left:0;top:90.48px;width:820px;height:1px;background:#a8a8a8"></div>
<div class="a" style="left:0.0px;top:80.35px;font:9.6px/9.6px 'Liberation Sans', sans-serif;color:#3a3af0;transform:scaleX(0.953);transform-origin:0 0">12<span style="opacity:0">_</span>30925</div>
<div class="a" style="left:0.0px;top:89.07px;width:40.7px;height:1px;background:#6262f4"></div>
<div class="a" style="left:58.7px;top:80.85px;font:8.3px/8.3px 'Liberation Sans', sans-serif;color:#202020;transform:scaleX(0.942);transform-origin:0 0">37.17</div>
<div class="a" style="left:123.9px;top:80.85px;font:8.3px/8.3px 'Liberation Sans', sans-serif;color:#202020;transform:scaleX(0.942);transform-origin:0 0">3H</div>
<div class="a" style="left:205.6px;top:80.35px;font:9.6px/9.6px 'Liberation Sans', sans-serif;color:#3a3af0;transform:scaleX(0.921);transform-origin:0 0">LOC<span style="opacity:0">_</span>Os01g01312</div>
<div class="a" style="left:205.6px;top:89.07px;width:73.7px;height:1px;background:#6262f4"></div>
<div class="a" style="left:281.4px;top:80.85px;font:8.3px/8.3px 'Liberation Sans', sans-serif;color:#202020;transform:scaleX(0.942);transform-origin:0 0">Rice</div>
<div class="a" style="left:354.9px;top:80.85px;font:8.3px/8.3px 'Liberation Sans', sans-serif;color:#202020;transform:scaleX(0.942);transform-origin:0 0">1</div>
<div class="a" style="left:442.8px;top:80.85px;font:8.3px/8.3px 'Liberation Sans', sans-serif;color:#202020;transform:scaleX(0.942);transform-origin:0 0">150409.0</div>
<div class="a" style="left:513.6px;top:80.85px;font:8.3px/8.3px 'Liberation Sans', sans-serif;color:#202020;transform:scaleX(0.942);transform-origin:0 0">0.0</div>
<div class="a" style="left:576.9px;top:80.85px;font:8.3px/8.3px 'Liberation Sans', sans-serif;color:#202020;transform:scaleX(0.942);transform-origin:0 0">"retrotransposon protein, putative, Ty1-copia subclass, expressed"</div>
<div class="a" style="left:0;top:101.89px;width:820px;height:1px;background:#a8a8a8"></div>
<div class="a" style="left:0.0px;top:91.76px;font:9.6px/9.6px 'Liberation Sans', sans-serif;color:#3a3af0;transform:scaleX(0.969);transform-origin:0 0">11<span style="opacity:0">_</span>10672</div>
<div class="a" style="left:0.0px;top:100.48px;width:40.7px;height:1px;background:#6262f4"></div>
<div class="a" style="left:58.7px;top:92.26px;font:8.3px/8.3px 'Liberation Sans', sans-serif;color:#202020;transform:scaleX(0.942);transform-origin:0 0">37.17</div>
<div class="a" style="left:123.9px;top:92.26px;font:8.3px/8.3px 'Liberation Sans', sans-serif;color:#202020;transform:scaleX(0.942);transform-origin:0 0">3H</div>
<div class="a" style="left:205.6px;top:91.76px;font:9.6px/9.6px 'Liberation Sans', sans-serif;color:#3a3af0;transform:scaleX(0.921);transform-origin:0 0">LOC<span style="opacity:0">_</span>Os08g19830</div>
<div class="a" style="left:205.6px;top:100.48px;width:73.7px;height:1px;background:#6262f4"></div>
<div class="a" style="left:281.4px;top:92.26px;font:8.3px/8.3px 'Liberation Sans', sans-serif;color:#202020;transform:scaleX(0.942);transform-origin:0 0">Rice</div>
<div class="a" style="left:354.9px;top:92.26px;font:8.3px/8.3px 'Liberation Sans', sans-serif;color:#202020;transform:scaleX(0.942);transform-origin:0 0">8</div>
<div class="a" style="left:442.8px;top:92.26px;font:8.3px/8.3px 'Liberation Sans', sans-serif;color:#202020;transform:scaleX(0.942);transform-origin:0 0">1.1878535E7</div>
<div class="a" style="left:513.6px;top:92.26px;font:8.3px/8.3px 'Liberation Sans', sans-serif;color:#202020;transform:scaleX(0.942);transform-origin:0 0">0.0</div>
<div class="a" style="left:576.9px;top:92.26px;font:8.3px/8.3px 'Liberation Sans', sans-serif;color:#202020;transform:scaleX(0.942);transform-origin:0 0">"ubiquitin family protein, putative, expressed"</div>
<div class="a" style="left:0;top:113.30px;width:820px;height:1px;background:#a8a8a8"></div>
<div class="a" style="left:0.0px;top:103.17px;font:9.6px/9.6px 'Liberation Sans', sans-serif;color:#3a3af0;transform:scaleX(0.953);transform-origin:0 0">12<span style="opacity:0">_</span>10968</div>
<div class="a" style="left:0.0px;top:111.89px;width:40.7px;height:1px;background:#6262f4"></div>
<div class="a" style="left:58.7px;top:103.67px;font:8.3px/8.3px 'Liberation Sans', sans-serif;color:#202020;transform:scaleX(0.942);transform-origin:0 0">38.69</div>
<div class="a" style="left:123.9px;top:103.67px;font:8.3px/8.3px 'Liberation Sans', sans-serif;color:#202020;transform:scaleX(0.942);transform-origin:0 0">3H</div>
<div class="a" style="left:205.6px;top:103.17px;font:9.6px/9.6px 'Liberation Sans', sans-serif;color:#3a3af0;transform:scaleX(0.921);transform-origin:0 0">LOC<span style="opacity:0">_</span>Os01g04130</div>
<div class="a" style="left:205.6px;top:111.89px;width:73.7px;height:1px;background:#6262f4"></div>
<div class="a" style="left:281.4px;top:103.67px;font:8.3px/8.3px 'Liberation Sans', sans-serif;color:#202020;transform:scaleX(0.942);transform-origin:0 0">Rice</div>
<div class="a" style="left:354.9px;top:103.67px;font:8.3px/8.3px 'Liberation Sans', sans-serif;color:#202020;transform:scaleX(0.942);transform-origin:0 0">1</div>
<div class="a" style="left:442.8px;top:103.67px;font:8.3px/8.3px 'Liberation Sans', sans-serif;color:#202020;transform:scaleX(0.942);transform-origin:0 0">61050.0</div>
<div class="a" style="left:513.6px;top:103.67px;font:8.3px/8.3px 'Liberation Sans', sans-serif;color:#202020;transform:scaleX(0.942);transform-origin:0 0">0.0</div>
<div class="a" style="left:576.9px;top:103.67px;font:8.3px/8.3px 'Liberation Sans', sans-serif;color:#202020;transform:scaleX(0.942);transform-origin:0 0">"enolase-phosphatase E1, putative, expressed"</div>
<div class="a" style="left:57.0px;top:0;width:1px;height:107px;background:#9c9c9c"></div>
<div class="a" style="left:122.2px;top:0;width:1px;height:107px;background:#9c9c9c"></div>
<div class="a" style="left:203.8px;top:0;width:1px;height:107px;background:#9c9c9c"></div>
<div class="a" style="left:279.7px;top:0;width:1px;height:107px;background:#9c9c9c"></div>
<div class="a" style="left:353.2px;top:0;width:1px;height:107px;background:#9c9c9c"></div>
<div class="a" style="left:441.1px;top:0;width:1px;height:107px;background:#9c9c9c"></div>
<div class="a" style="left:511.9px;top:0;width:1px;height:107px;background:#9c9c9c"></div>
<div class="a" style="left:575.2px;top:0;width:1px;height:107px;background:#9c9c9c"></div>
<div class="a" style="left:122.7px;top:22.52px;width:81.6px;height:11.71px;border:1px dotted #74747c"></div>
<div class="a" style="left:819px;top:0;width:1px;height:107px;background:#a0a0a0"></div>
</div>
<div class="a" style="left:1004.5px;top:474px;width:13.5px;height:107px;background:#f6f6fa"></div>
<div class="a" style="left:1005px;top:474.3px;width:12.8px;height:13px;border:1px solid #b8bcd4;border-radius:2px;background:linear-gradient(#fafafe,#dcdcec)"></div>
<svg class="a" style="left:1007px;top:478.3px" width="9" height="6"><path d="M1.5 4.5 L4.5 1.5 L7.5 4.5" fill="none" stroke="#202030" stroke-width="1.5"/></svg>
<div class="a" style="left:1005px;top:567.6px;width:12.8px;height:13px;border:1px solid #b8bcd4;border-radius:2px;background:linear-gradient(#fafafe,#dcdcec)"></div>
<svg class="a" style="left:1007px;top:571.6px" width="9" height="6"><path d="M1.5 1.5 L4.5 4.5 L7.5 1.5" fill="none" stroke="#202030" stroke-width="1.5"/></svg>
<div class="a" style="left:1005px;top:487.8px;width:12.8px;height:52.4px;border:1px solid #c0c4dc;border-radius:2px;background:linear-gradient(90deg,#e6e8f4,#f4f4fa 40%,#d8dcec)"></div>
<div class="a" style="left:1008.5px;top:511.5px;width:5.5px;height:5px;border-top:1px solid #a8acc4;border-bottom:1px solid #a8acc4"></div>
<div class="a" style="left:1008.5px;top:513.5px;width:5.5px;height:1px;background:#a8acc4"></div>
<div class="a" style="left:0;top:592px;width:1024px;height:2px;background:#ececf0"></div><div class="a" style="left:0;top:594px;width:1024px;height:1px;background:#b4b4c8"></div>
</body></html>
